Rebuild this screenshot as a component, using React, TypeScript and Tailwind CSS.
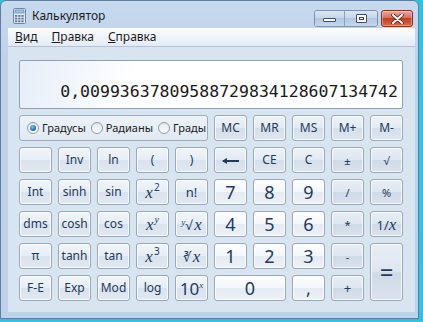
import type { ReactNode } from 'react';

type Kind = 'fn' | 'num' | 'op' | 'mem';

function Key({
  children,
  kind = 'fn',
  className = '',
}: {
  children?: ReactNode;
  kind?: Kind;
  className?: string;
}) {
  const bg =
    kind === 'num'
      ? 'bg-[linear-gradient(#fdfeff,#f3f6fa_48%,#e6ebf2_52%,#eef2f7)] text-[18px]'
      : kind === 'op'
        ? 'bg-[linear-gradient(#e8eef6,#dee6f0_48%,#d0dae7_52%,#d9e2ed)] text-[11px]'
        : kind === 'mem'
          ? 'bg-[linear-gradient(#eef3f9,#e3eaf3_48%,#d5dfeb_52%,#dde5ef)] text-[12px]'
          : 'bg-[linear-gradient(#f1f5fa,#e7edf5_48%,#d9e2ee_52%,#e1e8f1)] text-[12px]';
  return (
    <div
      className={`flex items-center justify-center rounded-[3px] border border-[#98a8bd] text-[#1f3a5c] shadow-[inset_0_0_0_1px_rgba(255,255,255,0.75)] leading-none ${bg} ${className}`}
    >
      <span className="whitespace-nowrap">{children}</span>
    </div>
  );
}

function X() {
  return <i className="font-['Liberation_Serif',serif] text-[17px]">x</i>;
}

function Sup({ children, italic }: { children: ReactNode; italic?: boolean }) {
  return (
    <span
      className={`relative -top-[7px] ml-[1px] text-[10px] ${italic ? "font-['Liberation_Serif',serif] italic" : ''}`}
    >
      {children}
    </span>
  );
}

function Radio({ on, label }: { on?: boolean; label: string }) {
  return (
    <div className="flex items-center gap-[3px]">
      <div className="flex h-[12px] w-[12px] items-center justify-center rounded-full border border-[#8d9bac] bg-[linear-gradient(#e3e7ec,#fdfdfe)]">
        {on && <div className="h-[6px] w-[6px] rounded-full bg-[radial-gradient(circle_at_40%_35%,#7fc3f4,#1a5fa6_70%)]" />}
      </div>
      <span>{label}</span>
    </div>
  );
}

export default function App() {
  return (
    <div className="h-[322px] w-[423px] overflow-hidden bg-[#2fc3df] font-['Noto_Sans','Open_Sans',sans-serif]">
      <div className="flex h-[319px] w-[419px] flex-col rounded-t-[6px] border border-[#617d9f] bg-[linear-gradient(#c6d9ef,#bed2ea_60px,#bdd1e9)] pl-[7px] pr-[3px] pb-[6px]">
        {/* title bar */}
        <div className="relative flex h-[27px] shrink-0 items-center">
          <svg width="13" height="16" viewBox="0 0 13 16" className="ml-[5px] mt-[3px]">
            <rect x="0.5" y="0.5" width="12" height="15" rx="1" fill="#dfe8f3" stroke="#6f86a3" />
            <rect x="2" y="2" width="9" height="3" fill="#9fc3ea" stroke="#4f79a8" strokeWidth="0.6" />
            {[0, 1, 2].map((r) =>
              [0, 1, 2].map((c) => (
                <rect key={`${r}-${c}`} x={2 + c * 3.2} y={7 + r * 2.7} width="2.2" height="1.8" fill="#5f7693" />
              )),
            )}
          </svg>
          <span className="ml-[6px] mt-[3px] text-[12px] text-[#1b1b1b]">Калькулятор</span>
          <div className="absolute right-[2px] top-[9px] flex items-start gap-[3px]">
            <div className="flex h-[17px] overflow-hidden rounded-[3px] border border-[#7b91ad] shadow-[inset_0_0_0_1px_rgba(255,255,255,0.5)]">
              <div className="flex w-[30px] items-center justify-center border-r border-[#8ea2bb] bg-[linear-gradient(#dbe6f3,#c3d4ea_50%,#b2c7e1_50%,#c3d6ec)]">
                <div className="mt-[3px] h-[4px] w-[13px] rounded-[1px] border border-[#3d4f68] bg-white" />
              </div>
              <div className="flex w-[32px] items-center justify-center bg-[linear-gradient(#dbe6f3,#c3d4ea_50%,#b2c7e1_50%,#c3d6ec)]">
                <div className="flex h-[9px] w-[11px] items-center justify-center rounded-[1px] border border-[#3d4f68] bg-white">
                  <div className="h-[3px] w-[5px] border border-[#3d4f68]" />
                </div>
              </div>
            </div>
            <div className="flex h-[17px] w-[32px] items-center justify-center rounded-[3px] border border-[#7a3427] bg-[linear-gradient(#e9a99a,#d66b53_50%,#c3401f_50%,#d9694a)] shadow-[inset_0_0_0_1px_rgba(255,255,255,0.35)]">
              <svg width="13" height="10" viewBox="0 0 13 10">
                <path d="M2 1 L11 9 M11 1 L2 9" stroke="#5a2418" strokeWidth="3.6" strokeLinecap="round" />
                <path d="M2 1 L11 9 M11 1 L2 9" stroke="#ffffff" strokeWidth="2" strokeLinecap="round" />
              </svg>
            </div>
          </div>
        </div>

        {/* menu */}
        <div className="flex h-[19px] shrink-0 items-center gap-[14px] border-b border-[#b3c2d4] bg-[linear-gradient(#fbfcfe,#eef3f9_60%,#e3eaf4)] pl-[7px] text-[12px] text-[#1b1b1b]">
          <span>
            <u>В</u>ид
          </span>
          <span>
            <u>П</u>равка
          </span>
          <span>
            <u>С</u>правка
          </span>
        </div>

        {/* content */}
        <div className="flex flex-1 flex-col bg-[#d9e4f1] pl-[11px] pt-[13px]">
          <div className="flex h-[49px] w-[384px] items-end justify-end rounded-[2px] border border-[#8f9fb4] bg-[linear-gradient(100deg,#e6eef8,#ffffff_30%)] pb-[8px] pr-[4px] font-['DejaVu_Sans_Mono',monospace] text-[16.5px] leading-none text-[#1a1a1a]">
            0,00993637809588729834128607134742
          </div>

          <div className="mt-[6px] grid w-[384px] grid-cols-[repeat(10,33px)] grid-rows-[repeat(6,26px)] gap-[6px]">
            <div className="col-span-5 flex items-center gap-[5px] rounded-[3px] border border-[#9eadc0] bg-[linear-gradient(#edf2f8,#e1e9f3)] pl-[7px] text-[11px] text-[#1b1b1b]">
              <Radio on label="Градусы" />
              <Radio label="Радианы" />
              <Radio label="Грады" />
            </div>
            <Key kind="mem">MC</Key>
            <Key kind="mem">MR</Key>
            <Key kind="mem">MS</Key>
            <Key kind="mem">M+</Key>
            <Key kind="mem">M-</Key>

            <Key />
            <Key>Inv</Key>
            <Key>ln</Key>
            <Key>(</Key>
            <Key>)</Key>
            <Key kind="mem">
              <svg width="18" height="6" viewBox="0 0 18 6" className="inline-block">
                <path d="M1 3 H17" stroke="#1f3a5c" strokeWidth="2" />
                <path d="M0 3 L5 0 V6 Z" fill="#1f3a5c" />
              </svg>
            </Key>
            <Key kind="mem">CE</Key>
            <Key kind="mem">C</Key>
            <Key kind="op">±</Key>
            <Key kind="op">√</Key>

            <Key>Int</Key>
            <Key>sinh</Key>
            <Key>sin</Key>
            <Key>
              <X />
              <Sup>2</Sup>
            </Key>
            <Key className="text-[13px]">n!</Key>
            <Key kind="num">7</Key>
            <Key kind="num">8</Key>
            <Key kind="num">9</Key>
            <Key kind="op">/</Key>
            <Key kind="op">%</Key>

            <Key>dms</Key>
            <Key>cosh</Key>
            <Key>cos</Key>
            <Key>
              <X />
              <Sup italic>y</Sup>
            </Key>
            <Key>
              <span className="relative -top-[5px] font-['Liberation_Serif',serif] text-[9px] italic">y</span>
              <span className="text-[13px]">√</span>
              <span className="ml-[2px]">
                <X />
              </span>
            </Key>
            <Key kind="num">4</Key>
            <Key kind="num">5</Key>
            <Key kind="num">6</Key>
            <Key kind="op">*</Key>
            <Key kind="op">
              <span className="text-[13px]">1/</span>
              <X />
            </Key>

            <Key>π</Key>
            <Key>tanh</Key>
            <Key>tan</Key>
            <Key>
              <X />
              <Sup>3</Sup>
            </Key>
            <Key>
              <span className="text-[13px]">∛</span>
              <span className="ml-[2px]">
                <X />
              </span>
            </Key>
            <Key kind="num">1</Key>
            <Key kind="num">2</Key>
            <Key kind="num">3</Key>
            <Key kind="op">-</Key>
            <Key kind="op" className="row-span-2 text-[24px]">
              =
            </Key>

            <Key>F-E</Key>
            <Key>Exp</Key>
            <Key>Mod</Key>
            <Key>log</Key>
            <Key className="text-[17px]">
              10
              <span className="relative -top-[7px] font-['Liberation_Serif',serif] text-[9px] italic">x</span>
            </Key>
            <Key kind="num" className="col-span-2">
              0
            </Key>
            <Key kind="num" className="text-[12px]">
              ,
            </Key>
            <Key kind="op" className="text-[13px]">
              +
            </Key>
          </div>
        </div>
      </div>
    </div>
  );
}
